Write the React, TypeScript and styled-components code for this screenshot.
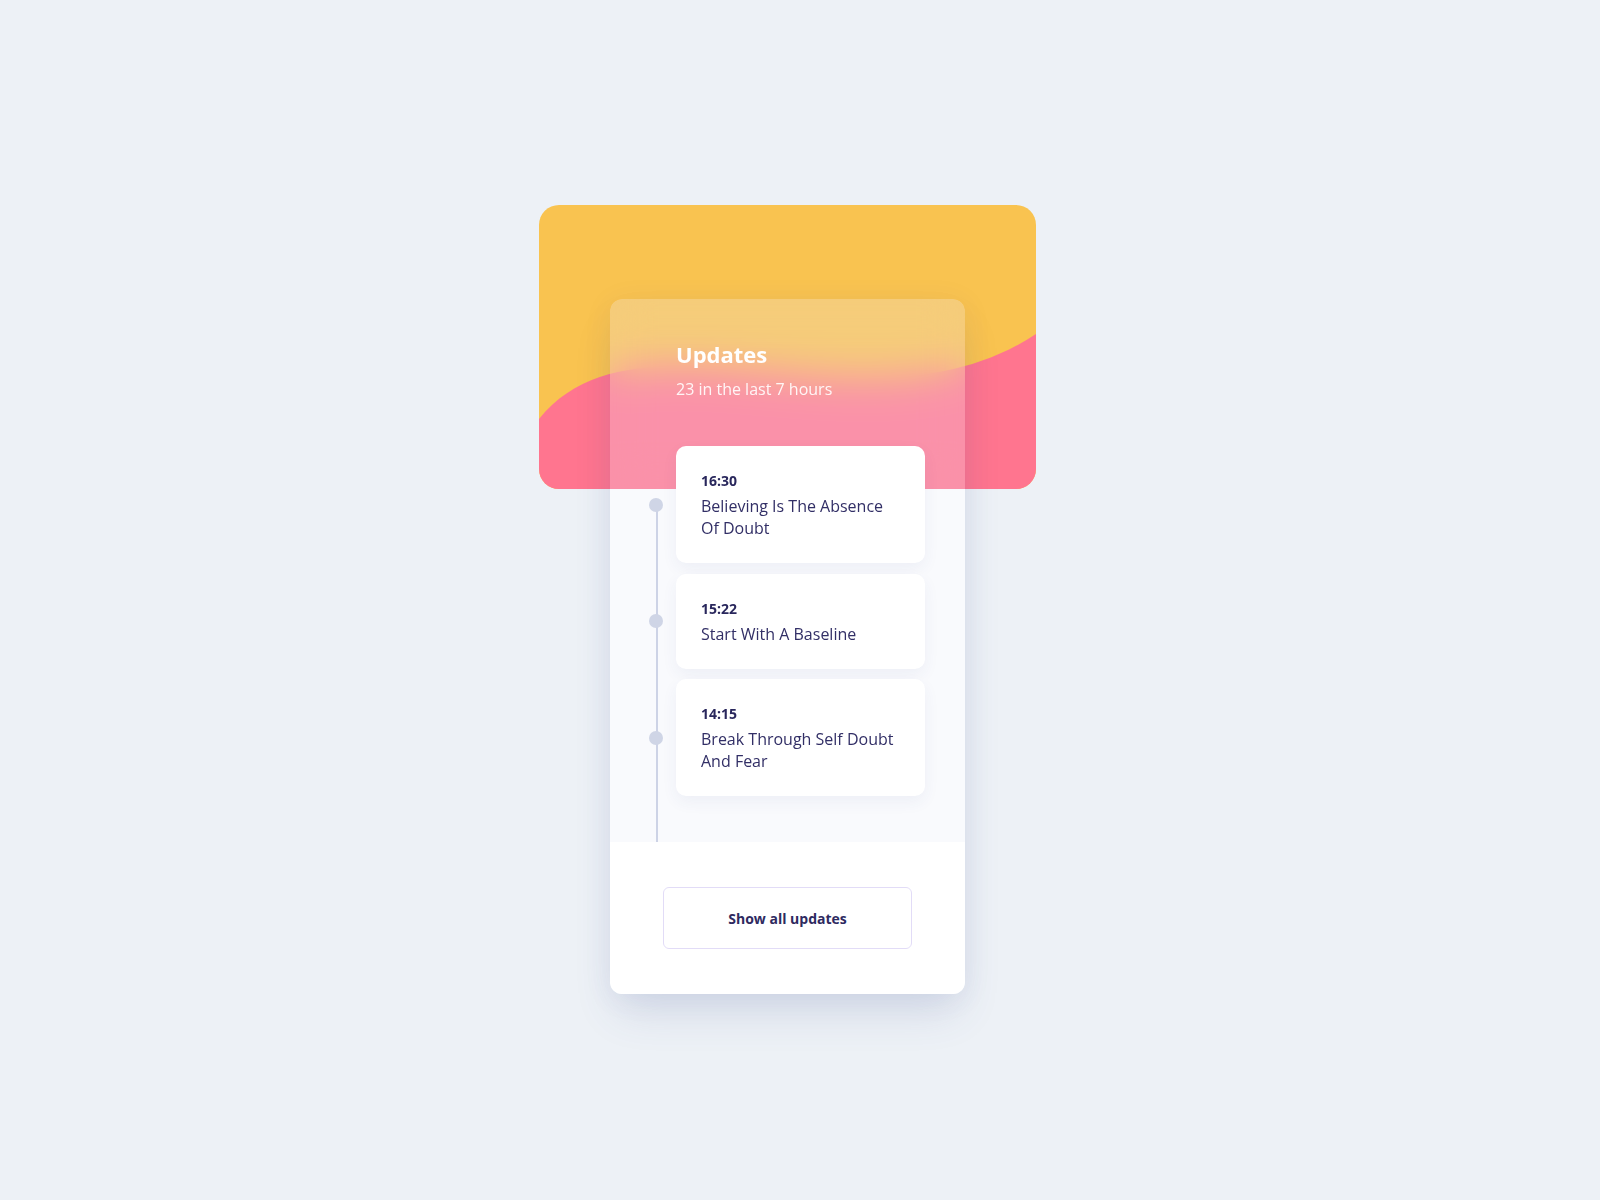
import styled, { createGlobalStyle } from 'styled-components'

type Update = {
  time: string
  title: string
}

const updates: Update[] = [
  { time: '16:30', title: 'Believing Is The Absence Of Doubt' },
  { time: '15:22', title: 'Start With A Baseline' },
  { time: '14:15', title: 'Break Through Self Doubt And Fear' },
]

const GlobalStyle = createGlobalStyle`
  * {
    box-sizing: border-box;
  }

  body {
    margin: 0;
    background: #edf1f6;
    font-family: 'Open Sans', 'Noto Sans', sans-serif;
    -webkit-font-smoothing: antialiased;
  }
`

const Page = styled.main`
  display: flex;
  justify-content: center;
  min-height: 100vh;
  padding: 299px 25px 0 0;
`

const Scene = styled.div`
  position: relative;
  width: 355px;
`

const Backdrop = styled.div`
  position: absolute;
  top: -94px;
  left: -71px;
  width: 497px;
  height: 284px;
  border-radius: 20px;
  overflow: hidden;
  z-index: 0;

  svg {
    display: block;
    width: 100%;
    height: 100%;
  }
`

const StyledCard = styled.section`
  position: relative;
  z-index: 1;
  border-radius: 12px;
  overflow: hidden;
  box-shadow: 0 24px 44px -8px rgba(70, 88, 150, 0.16),
    0 4px 30px rgba(70, 88, 150, 0.07);
`

const StyledTop = styled.div`
  position: relative;
  background: linear-gradient(to bottom, transparent 190px, #f9fafd 190px);

  &:before {
    content: '';
    position: absolute;
    top: 0;
    left: 0;
    right: 0;
    height: 190px;
    background: rgba(236, 232, 246, 0.25);
    backdrop-filter: blur(20px);
    -webkit-backdrop-filter: blur(20px);
  }
`

const StyledHeader = styled.header`
  position: relative;
  padding: 40px 0 0 66px;
  color: #ffffff;

  h2 {
    margin: 0;
    font-size: 22px;
    line-height: 30px;
    font-weight: 700;
  }

  p {
    margin: 9px 0 0;
    font-size: 16px;
    line-height: 22px;
    font-weight: 400;
    color: rgba(255, 255, 255, 0.9);
  }
`

const StyledTimeline = styled.ol`
  position: relative;
  list-style: none;
  margin: 0;
  padding: 46px 40px 46px 66px;
  display: flex;
  flex-direction: column;
  gap: 10.5px;
`

const Rail = styled.span`
  position: absolute;
  top: 104px;
  bottom: 0;
  left: 45.5px;
  width: 2px;
  background: #cdd3e6;
`

const StyledItem = styled.li`
  position: relative;
  padding: 25px 25px 24px;
  border-radius: 10px;
  background: #ffffff;
  box-shadow: 0 6px 16px rgba(55, 65, 140, 0.06);

  &:before {
    content: '';
    position: absolute;
    left: -27px;
    top: 50%;
    width: 14px;
    height: 14px;
    margin-top: -7px;
    border-radius: 50%;
    background: #cfd5e6;
  }

  time {
    display: block;
    font-size: 14px;
    line-height: 19px;
    font-weight: 700;
    color: #29275c;
  }

  h3 {
    margin: 5px 0 0;
    font-size: 16px;
    line-height: 22px;
    font-weight: 400;
    color: #322f66;
  }
`

const StyledFooter = styled.footer`
  padding: 45px 53px;
  background: #ffffff;
`

const ShowAllButton = styled.button`
  display: block;
  width: 100%;
  height: 62px;
  border: 1px solid #e2dcf7;
  border-radius: 6px;
  background: #ffffff;
  font-family: 'Open Sans', 'Noto Sans', sans-serif;
  font-size: 14px;
  font-weight: 700;
  color: #2e2a5f;
  cursor: pointer;
`

const Wave = () => (
  <svg viewBox="0 0 497 284" preserveAspectRatio="none">
    <rect width="497" height="284" fill="#f9c350" />
    <path d="M0,214 C100,90 330,240 497,129 L497,284 L0,284 Z" fill="#ff758f" />
  </svg>
)

const App = () => {
  return (
    <>
      <GlobalStyle />
      <Page>
        <Scene>
          <Backdrop>
            <Wave />
          </Backdrop>

          <StyledCard>
            <StyledTop>
              <StyledHeader>
                <h2>Updates</h2>
                <p>23 in the last 7 hours</p>
              </StyledHeader>

              <StyledTimeline>
                <Rail />
                {updates.map((update) => (
                  <StyledItem key={update.time}>
                    <time>{update.time}</time>
                    <h3>{update.title}</h3>
                  </StyledItem>
                ))}
              </StyledTimeline>
            </StyledTop>

            <StyledFooter>
              <ShowAllButton>Show all updates</ShowAllButton>
            </StyledFooter>
          </StyledCard>
        </Scene>
      </Page>
    </>
  )
}

export default App
